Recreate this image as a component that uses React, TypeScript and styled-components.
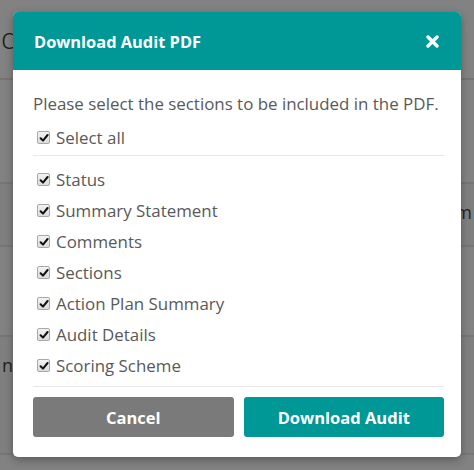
import styled, { createGlobalStyle } from 'styled-components';

const GlobalStyle = createGlobalStyle`
  html, body {
    margin: 0;
    padding: 0;
    width: 474px;
    height: 470px;
    overflow: hidden;
    font-family: "Open Sans", "Liberation Sans", sans-serif;
  }
`;

const sections = [
  'Status',
  'Summary Statement',
  'Comments',
  'Sections',
  'Action Plan Summary',
  'Audit Details',
  'Scoring Scheme',
];

function CheckMark() {
  return (
    <CheckBox>
      <svg width="10" height="10" viewBox="0 0 10 10">
        <path d="M1.6 5.2 L4 7.6 L8.6 2" fill="none" stroke="#111" strokeWidth="2" strokeLinecap="round" strokeLinejoin="round" />
      </svg>
    </CheckBox>
  );
}

export default function App() {
  return (
    <Screen>
      <GlobalStyle />
      <BehindPage>
        <SearchBar>
          <SearchText>d</SearchText>
        </SearchBar>
        <Spacer $h={102} />
        <ListRow $h={65}>
          <RowText $align="flex-end">m</RowText>
        </ListRow>
        <Spacer $h={88} />
        <ListRow $h={120}>
          <RowText $align="flex-start">n</RowText>
        </ListRow>
      </BehindPage>

      <Backdrop>
        <Modal>
          <ModalHeader>
            <Title>Download Audit PDF</Title>
            <CloseButton aria-label="Close">
              <svg width="13" height="13" viewBox="0 0 13 13">
                <path d="M2 2 L11 11 M11 2 L2 11" stroke="#fff" strokeWidth="3.4" strokeLinecap="round" />
              </svg>
            </CloseButton>
          </ModalHeader>
          <ModalBody>
            <Intro>Please select the sections to be included in the PDF.</Intro>
            <OptionRow>
              <CheckMark />
              <span>Select all</span>
            </OptionRow>
            <Divider />
            <OptionList>
              {sections.map((s) => (
                <OptionRow key={s}>
                  <CheckMark />
                  <span>{s}</span>
                </OptionRow>
              ))}
            </OptionList>
            <Divider />
            <Footer>
              <Button $variant="cancel">Cancel</Button>
              <Button $variant="primary">Download Audit</Button>
            </Footer>
          </ModalBody>
        </Modal>
      </Backdrop>
    </Screen>
  );
}

const Screen = styled.div`
  position: relative;
  width: 474px;
  height: 470px;
  overflow: hidden;
  background: #fff;
`;

const BehindPage = styled.div`
  display: flex;
  flex-direction: column;
  height: 100%;
`;

const SearchBar = styled.div`
  height: 80px;
  border-bottom: 2px solid #e4e4e4;
  display: flex;
  align-items: center;
  box-sizing: border-box;
`;

const SearchText = styled.span`
  font-size: 30px;
  font-weight: 300;
  color: #333;
  margin-top: -4px;
  margin-left: 1px;
`;

const Spacer = styled.div<{ $h: number }>`
  height: ${(p) => p.$h}px;
`;

const ListRow = styled.div<{ $h: number }>`
  height: ${(p) => p.$h}px;
  border-top: 2px solid #e8e8e8;
  border-bottom: 2px solid #e8e8e8;
  background: #fafafa;
  display: flex;
  align-items: flex-start;
  padding: 16px 2px 0;
  box-sizing: border-box;
`;

const RowText = styled.div<{ $align: string }>`
  flex: 1;
  display: flex;
  justify-content: ${(p) => p.$align};
  font-size: 18px;
  color: #444;
`;

const Backdrop = styled.div`
  position: absolute;
  inset: 0;
  background: rgba(0, 0, 0, 0.49);
  display: flex;
  align-items: flex-start;
  justify-content: center;
  padding-top: 12px;
`;

const Modal = styled.div`
  width: 448px;
  background: #fff;
  border-radius: 5px;
  overflow: hidden;
  box-shadow: 0 3px 9px rgba(0, 0, 0, 0.3);
`;

const ModalHeader = styled.div`
  height: 58px;
  background: #009797;
  display: flex;
  align-items: center;
  justify-content: space-between;
  padding: 0 21px;
  box-sizing: border-box;
`;

const Title = styled.h4`
  margin: 0;
  color: #fff;
  font-size: 16.4px;
  font-weight: 700;
`;

const CloseButton = styled.button`
  border: none;
  background: transparent;
  padding: 0;
  display: flex;
  cursor: pointer;
  margin-right: 1px;
`;

const ModalBody = styled.div`
  padding: 20px 17px 20px 20px;
  color: #595959;
  font-size: 16.9px;
`;

const Intro = styled.p`
  margin: 2px 0 6px;
  line-height: 24px;
  white-space: nowrap;
`;

const OptionList = styled.div`
  display: flex;
  flex-direction: column;
  padding: 8px 0 3px;
`;

const OptionRow = styled.label`
  display: flex;
  align-items: center;
  gap: 6px;
  height: 31px;
  padding-left: 4px;
  line-height: 24px;
`;

const CheckBox = styled.span`
  width: 11px;
  height: 11px;
  border: 1px solid #a8a8a8;
  border-radius: 2px;
  background: linear-gradient(#f2f2f2, #dcdcdc);
  display: flex;
  align-items: center;
  justify-content: center;
  flex-shrink: 0;
`;

const Divider = styled.hr`
  border: none;
  border-top: 1px solid #e8e8e8;
  margin: 2px 0 0;
`;

const Footer = styled.div`
  display: grid;
  grid-template-columns: 1fr 1fr;
  gap: 10px;
  margin-top: 10px;
`;

const Button = styled.button<{ $variant: 'cancel' | 'primary' }>`
  height: 40px;
  border: none;
  border-radius: 3px;
  font-family: inherit;
  font-size: 16.5px;
  font-weight: 700;
  color: #fff;
  background: ${(p) => (p.$variant === 'primary' ? '#009797' : '#7a7a7a')};
`;
